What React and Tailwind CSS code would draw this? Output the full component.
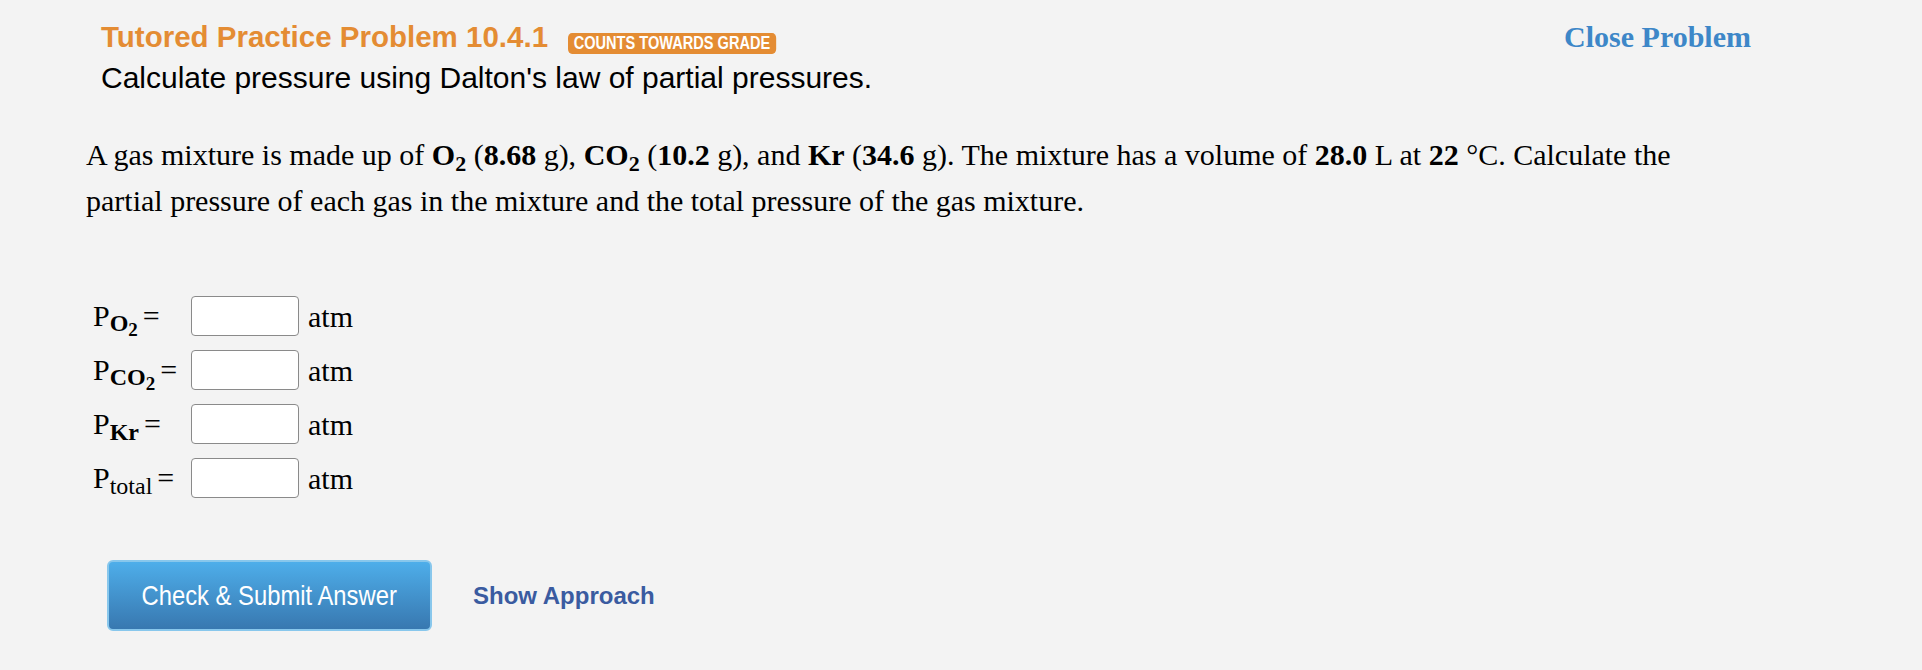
import React from "react";

const serif = { fontFamily: '"Liberation Serif", "Times New Roman", serif' };
const sans = { fontFamily: '"Liberation Sans", Arial, Helvetica, sans-serif' };

function Row({ label }) {
  return (
    <div className="flex items-center h-[54px]">
      <div className="w-[98px] flex items-center text-[30px] text-black leading-none" style={serif}>
        {label}
      </div>
      <input
        type="text"
        className="w-[108px] h-[40px] bg-white border-[1.5px] border-[#8a8a8a] rounded-[4px] outline-none"
      />
      <span className="ml-[9px] text-[30px] text-black" style={serif}>atm</span>
    </div>
  );
}

export default function App() {
  return (
    <div className="w-full h-[670px] bg-[#f3f3f3] overflow-hidden">
      <div className="flex justify-between pl-[101px] pr-[171px] pt-[20px]">
        <div>
          <div className="flex items-center">
            <span className="text-[29.5px] font-bold text-[#e48c33] leading-[34px]" style={sans}>
              Tutored Practice Problem 10.4.1
            </span>
            <span
              className="ml-[20px] mt-[12px] inline-block origin-left scale-x-[0.81] bg-[#e48c33] text-white font-bold text-[18px] leading-[21px] px-[7px] rounded-[5px]"
              style={sans}
            >
              COUNTS TOWARDS GRADE
            </span>
          </div>
          <div className="mt-[7px] text-[30px] text-black leading-[34px]" style={sans}>
            Calculate pressure using Dalton's law of partial pressures.
          </div>
        </div>
        <a href="#" className="text-[30px] font-bold text-[#3d87c8] leading-[34px]" style={serif}>
          Close Problem
        </a>
      </div>

      <p className="mt-[37px] ml-[86px] w-[1600px] text-[30px] leading-[46px] text-black" style={serif}>
        A gas mixture is made up of <b>O<sub className="text-[22px]">2</sub></b> (<b>8.68</b> g),{" "}
        <b>CO<sub className="text-[22px]">2</sub></b> (<b>10.2</b> g), and <b>Kr</b> (<b>34.6</b> g). The mixture
        has a volume of <b>28.0</b> L at <b>22</b> °C. Calculate the partial pressure of each gas in the mixture
        and the total pressure of the gas mixture.
      </p>

      <div className="mt-[65px] ml-[93px]">
        <Row
          label={
            <>
              P<sub className="text-[24px] font-bold bottom-[-0.35em]">O<sub className="text-[19px]">2</sub></sub>
              <span className="ml-[5px]">=</span>
            </>
          }
        />
        <Row
          label={
            <>
              P<sub className="text-[24px] font-bold bottom-[-0.35em]">CO<sub className="text-[19px]">2</sub></sub>
              <span className="ml-[5px]">=</span>
            </>
          }
        />
        <Row
          label={
            <>
              P<sub className="text-[24px] font-bold bottom-[-0.35em]">Kr</sub>
              <span className="ml-[5px]">=</span>
            </>
          }
        />
        <Row
          label={
            <>
              P<sub className="text-[24px] bottom-[-0.35em]">total</sub>
              <span className="ml-[5px]">=</span>
            </>
          }
        />
      </div>

      <div className="mt-[55px] ml-[107px] flex items-center">
        <button
          className="w-[325px] h-[71px] rounded-[6px] border-2 border-[#88c7ec] bg-gradient-to-b from-[#4eaeea] to-[#3878b0] text-white text-[28px] flex items-center justify-center"
          style={sans}
        >
          <span className="inline-block scale-x-[0.85] whitespace-nowrap">Check &amp; Submit Answer</span>
        </button>
        <a href="#" className="ml-[41px] text-[24px] font-bold text-[#3a5ba0]" style={sans}>
          Show Approach
        </a>
      </div>
    </div>
  );
}
